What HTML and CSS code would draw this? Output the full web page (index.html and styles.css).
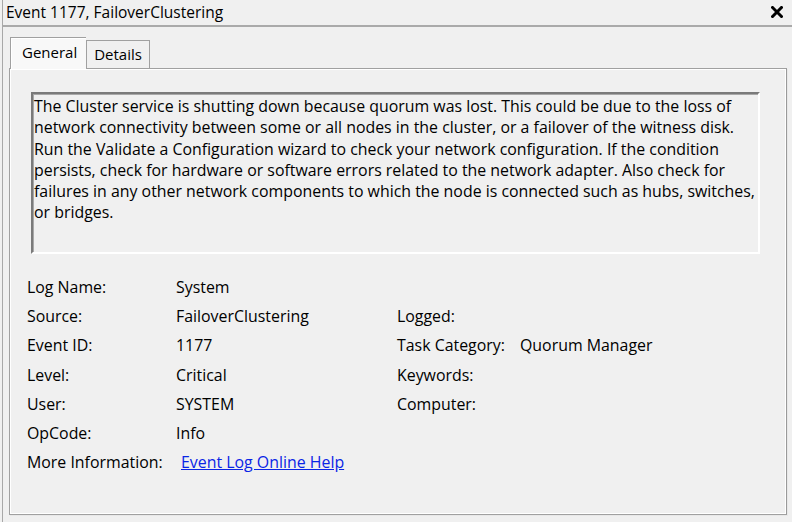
FILE: index.html
```html
<!DOCTYPE html>
<html>
<head>
<meta charset="utf-8">
<link rel="stylesheet" href="styles.css">
</head>
<body>
<div class="window">
  <div class="titlebar">
    <span class="title">Event 1177, FailoverClustering</span>
    <svg class="close" width="12" height="12" viewBox="0 0 12 12"><path d="M1.5 1.5 L10.5 10.5 M10.5 1.5 L1.5 10.5" stroke="#000" stroke-width="3" stroke-linecap="square"/></svg>
  </div>
  <div class="tabs">
    <div class="tab active">General</div>
    <div class="tab">Details</div>
  </div>
  <div class="panel">
    <div class="message">The Cluster service is shutting down because quorum was lost. This could be due to the loss of<br>network connectivity between some or all nodes in the cluster, or a failover of the witness disk.<br>Run the Validate a Configuration wizard to check your network configuration. If the condition<br>persists, check for hardware or software errors related to the network adapter. Also check for<br>failures in any other network components to which the node is connected such as hubs, switches,<br>or bridges.</div>
    <div class="fields">
      <div class="lbl">Log Name:</div><div class="val">System</div><div></div><div></div>
      <div class="lbl">Source:</div><div class="val">FailoverClustering</div><div class="lbl">Logged:</div><div class="val"></div>
      <div class="lbl">Event ID:</div><div class="val">1177</div><div class="lbl">Task Category:</div><div class="val">Quorum Manager</div>
      <div class="lbl">Level:</div><div class="val">Critical</div><div class="lbl">Keywords:</div><div class="val"></div>
      <div class="lbl">User:</div><div class="val">SYSTEM</div><div class="lbl">Computer:</div><div class="val"></div>
      <div class="lbl">OpCode:</div><div class="val">Info</div><div></div><div></div>
      <div class="lbl">More Information:</div><div class="val"><a class="link" href="#">Event Log Online Help</a></div><div></div><div></div>
    </div>
  </div>
</div>
</body>
</html>
```
FILE: styles.css
```css
html, body {
  margin: 0;
  padding: 0;
}
body {
  width: 792px;
  height: 522px;
  overflow: hidden;
  background: #f0f0f0;
  font-family: "Open Sans", "Noto Sans", sans-serif;
  color: #000;
}
.window {
  margin-left: 2px;
  height: 522px;
  border-left: 1px solid #a8a8a8;
  box-sizing: border-box;
}
.titlebar {
  height: 25px;
  border-bottom: 2px solid #aaaaaa;
  display: flex;
  align-items: center;
  justify-content: space-between;
  padding: 0 9px 0 3px;
}
.title {
  font-size: 15.5px;
  line-height: 24px;
  margin-top: -2px;
}
.close {
  margin-top: -2px;
}
.tabs {
  display: flex;
  align-items: flex-end;
  margin-left: 6px;
  margin-top: 10px;
  height: 31px;
}
.tab {
  font-size: 15px;
  border: 1px solid #a0a0a0;
  border-bottom: none;
  background: #f0f0f0;
  height: 28px;
  line-height: 27px;
  padding: 0 7px;
  box-sizing: border-box;
}
.tab.active {
  height: 32px;
  line-height: 28px;
  padding: 0 9px 0 11px;
  background: #f8f8f8;
  box-shadow: inset 1px 1px 0 #ffffff;
  position: relative;
  z-index: 1;
  margin-bottom: -1px;
  margin-left: 1px;
  border-right: none;
}
.panel {
  margin-left: 6px;
  width: 778px;
  height: 447px;
  box-sizing: border-box;
  border: 1px solid #a0a0a0;
  border-right-color: #9a9a9a;
  box-shadow: inset 1px 1px 0 #ffffff, inset -1px -1px 0 #ffffff, 1px 1px 0 #e8e8e8;
  padding: 23px 0 0 21px;
}
.message {
  width: 729px;
  height: 162px;
  box-sizing: border-box;
  border-top: 2px solid #7a7a7a;
  border-left: 2px solid #7a7a7a;
  border-right: 2px solid #ffffff;
  border-bottom: 2px solid #ffffff;
  box-shadow: inset 1px 1px 0 #a8a8a8;
  padding: 2px 0 0 1px;
  font-size: 15.9px;
  line-height: 21.3px;
  white-space: nowrap;
  color: #000;
}
.fields {
  display: grid;
  grid-template-columns: 149px 221px 123px 1fr;
  grid-auto-rows: 29.3px;
  margin-left: -4px;
  margin-top: 18px;
  font-size: 15.9px;
  align-items: center;
}
.lbl, .val {
  white-space: nowrap;
}
.link {
  color: #0a25e6;
  text-decoration: underline;
  margin-left: 5px;
}
```
